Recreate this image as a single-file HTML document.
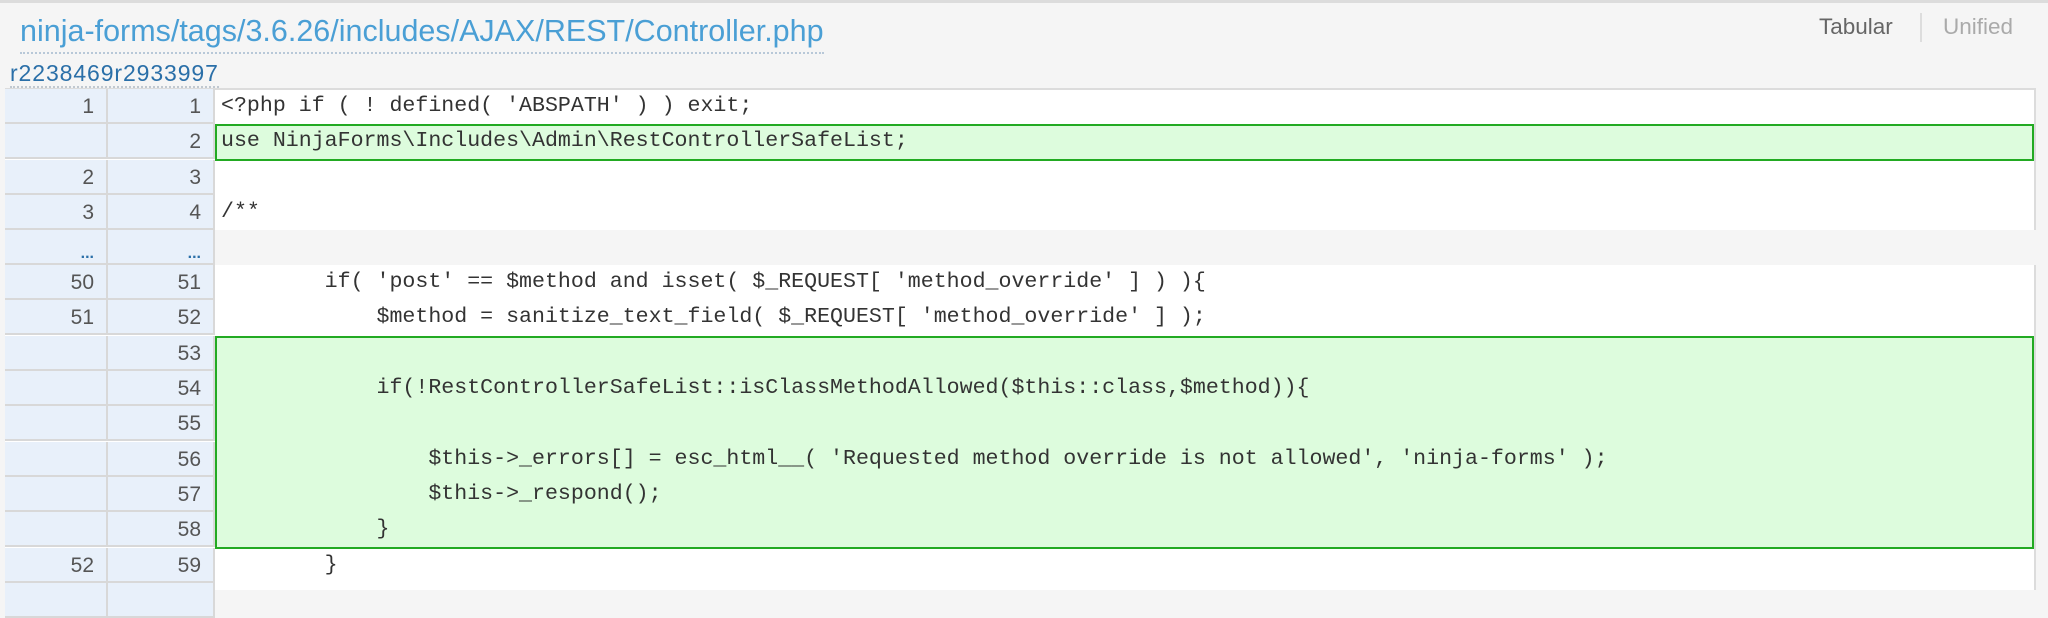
<!DOCTYPE html>
<html><head><meta charset="utf-8"><style>
html,body{margin:0;padding:0}
body{width:2048px;height:590px;background:#f5f5f5;position:relative;overflow:hidden;font-family:"Liberation Sans",sans-serif}
.top{position:absolute;left:0;top:0;width:2048px;height:3px;background:#dcdcdc}
.title{position:absolute;left:20px;top:11px;font-size:30.5px;color:#4a9fd5;white-space:nowrap;border-bottom:2px dotted #b8c8d8;line-height:41px;letter-spacing:0px}
.rev{position:absolute;left:10px;top:60px;font-size:23px;color:#2a6fa8;white-space:nowrap;border-bottom:2px dotted #c0c8d0;line-height:26px;letter-spacing:0.9px}
.tab{position:absolute;left:1819px;top:12px;font-size:22.5px;color:#666;line-height:30px}
.sep{position:absolute;left:1920px;top:13px;width:2px;height:29px;background:#ddd}
.uni{position:absolute;left:1943px;top:12px;font-size:22.5px;color:#aaa;line-height:30px}
.tbl{position:absolute;left:5px;top:88px;width:2031px;height:502px;background:#fff;border-top:2px solid #dcdcdc;border-right:2px solid #dcdcdc;box-sizing:border-box}
.row{position:absolute;left:5px;width:2031px;height:35px}
.g1,.g2{position:absolute;top:0;height:35px;background:#e8f0fa;box-sizing:border-box;border-bottom:2px solid #d8d8d8;border-right:2px solid #d8d8d8;text-align:right;font-size:21px;color:#555;line-height:35px;padding-right:12px}
.g1{left:0;width:103px}
.g2{left:103px;width:107px}
.c{position:absolute;left:210px;top:0;right:0;height:35px;font-family:"Liberation Mono",monospace;font-size:21.6px;line-height:35px;color:#333;white-space:pre;padding-left:6px;box-sizing:border-box;background:transparent}
.c.gray{background:#f5f5f5}
.add{position:absolute;left:215px;width:1819px;background:#ddfcdd;border:2px solid #22aa22;box-sizing:border-box}
.dots{line-height:48px;font-weight:bold;font-size:16px;color:#2a6fa8}
</style></head><body>
<div class="top"></div>
<div class="title">ninja-forms/tags/3.6.26/includes/AJAX/REST/Controller.php</div>
<div class="tab">Tabular</div><div class="sep"></div><div class="uni">Unified</div>
<div class="rev">r2238469r2933997</div>
<div class="tbl"></div>
<div class="add" style="top:124px;height:37px"></div>
<div class="add" style="top:336px;height:213px"></div>
<div class="row" style="top:89px"><div class="g1">1</div><div class="g2">1</div><div class="c">&lt;?php if ( ! defined( 'ABSPATH' ) ) exit;</div></div>
<div class="row" style="top:124px"><div class="g1"></div><div class="g2">2</div><div class="c">use NinjaForms\Includes\Admin\RestControllerSafeList;</div></div>
<div class="row" style="top:160px"><div class="g1">2</div><div class="g2">3</div><div class="c"></div></div>
<div class="row" style="top:195px"><div class="g1">3</div><div class="g2">4</div><div class="c">/**</div></div>
<div class="row" style="top:230px"><div class="g1 dots">...</div><div class="g2 dots">...</div><div class="c gray"></div></div>
<div class="row" style="top:265px"><div class="g1">50</div><div class="g2">51</div><div class="c">        if( 'post' == $method and isset( $_REQUEST[ 'method_override' ] ) ){</div></div>
<div class="row" style="top:300px"><div class="g1">51</div><div class="g2">52</div><div class="c">            $method = sanitize_text_field( $_REQUEST[ 'method_override' ] );</div></div>
<div class="row" style="top:336px"><div class="g1"></div><div class="g2">53</div><div class="c"></div></div>
<div class="row" style="top:371px"><div class="g1"></div><div class="g2">54</div><div class="c">            if(!RestControllerSafeList::isClassMethodAllowed($this::class,$method)){</div></div>
<div class="row" style="top:406px"><div class="g1"></div><div class="g2">55</div><div class="c"></div></div>
<div class="row" style="top:442px"><div class="g1"></div><div class="g2">56</div><div class="c">                $this-&gt;_errors[] = esc_html__( 'Requested method override is not allowed', 'ninja-forms' );</div></div>
<div class="row" style="top:477px"><div class="g1"></div><div class="g2">57</div><div class="c">                $this-&gt;_respond();</div></div>
<div class="row" style="top:512px"><div class="g1"></div><div class="g2">58</div><div class="c">            }</div></div>
<div class="row" style="top:548px"><div class="g1">52</div><div class="g2">59</div><div class="c">        }</div></div>
<div class="row" style="top:583px"><div class="g1"></div><div class="g2"></div></div>
</body></html>
